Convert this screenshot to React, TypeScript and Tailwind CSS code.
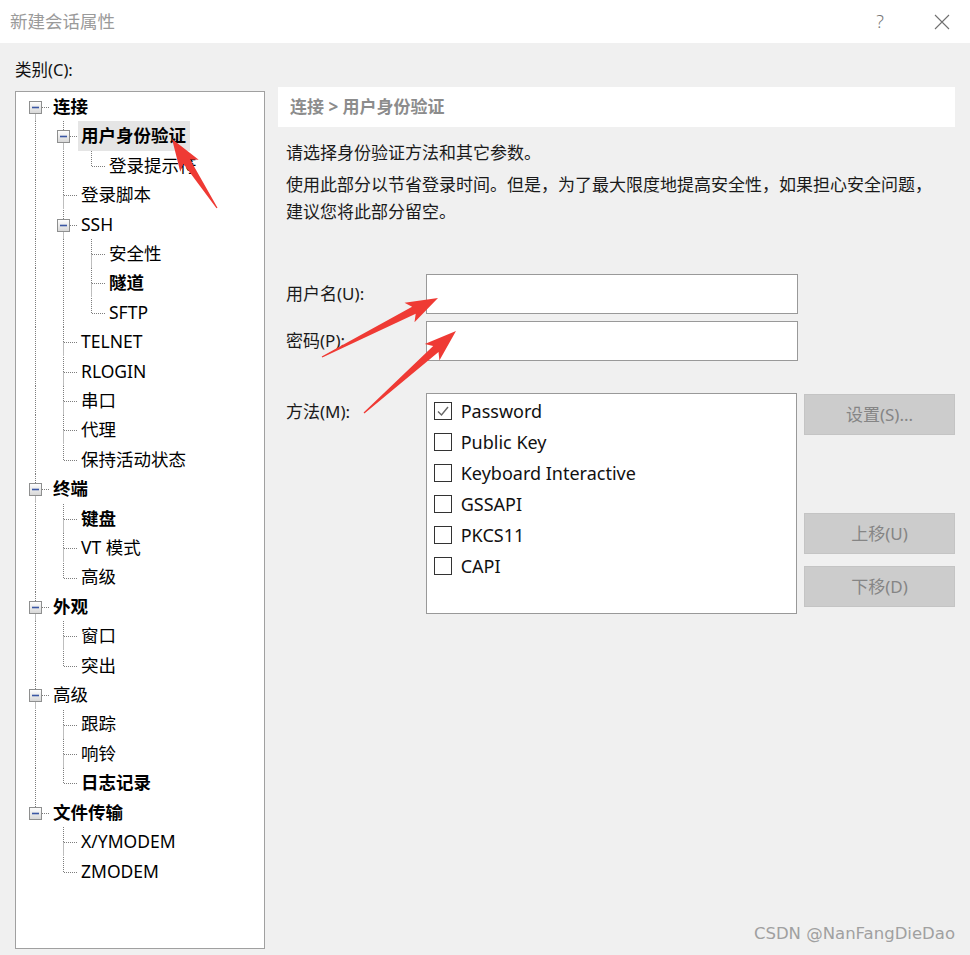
import React from "react"

type Node = {
  label: string
  bold?: boolean
  selected?: boolean
  children?: Node[]
}

type Row = {
  label: string
  bold?: boolean
  selected?: boolean
  level: number
  guides: boolean[]
  hasNext: boolean
  first: boolean
  expander: boolean
}

const tree: Node[] = [
  {
    label: "连接",
    bold: true,
    children: [
      { label: "用户身份验证", bold: true, selected: true, children: [{ label: "登录提示符" }] },
      { label: "登录脚本" },
      {
        label: "SSH",
        children: [{ label: "安全性" }, { label: "隧道", bold: true }, { label: "SFTP" }],
      },
      { label: "TELNET" },
      { label: "RLOGIN" },
      { label: "串口" },
      { label: "代理" },
      { label: "保持活动状态" },
    ],
  },
  {
    label: "终端",
    bold: true,
    children: [{ label: "键盘", bold: true }, { label: "VT 模式" }, { label: "高级" }],
  },
  { label: "外观", bold: true, children: [{ label: "窗口" }, { label: "突出" }] },
  {
    label: "高级",
    children: [{ label: "跟踪" }, { label: "响铃" }, { label: "日志记录", bold: true }],
  },
  {
    label: "文件传输",
    bold: true,
    children: [{ label: "X/YMODEM" }, { label: "ZMODEM" }],
  },
]

const flatten = (nodes: Node[], level: number, guides: boolean[], out: Row[]) => {
  nodes.forEach((n, i) => {
    const hasNext = i < nodes.length - 1
    out.push({
      label: n.label,
      bold: n.bold,
      selected: n.selected,
      level,
      guides,
      hasNext,
      first: level === 0 && i === 0,
      expander: !!n.children,
    })
    if (n.children) flatten(n.children, level + 1, [...guides, hasNext], out)
  })
  return out
}

const rows = flatten(tree, 0, [], [])

const ROW_H = 29.42
const LINE = "#7d7d7d"

/* ============ tree pieces ============ */
function GuideCell({ on }: { on: boolean }) {
  return (
    <svg width="28" height={ROW_H} className="shrink-0">
      {on && <line x1="13.5" y1="0" x2="13.5" y2={ROW_H} stroke={LINE} strokeDasharray="1 1" />}
    </svg>
  )
}

function ConnectorCell({ row }: { row: Row }) {
  const c = Math.round(ROW_H / 2) + 0.5
  return (
    <svg width="28" height={ROW_H} className="shrink-0">
      {!row.first && <line x1="13.5" y1="0" x2="13.5" y2={c} stroke={LINE} strokeDasharray="1 1" />}
      {row.hasNext && <line x1="13.5" y1={c} x2="13.5" y2={ROW_H} stroke={LINE} strokeDasharray="1 1" />}
      <line x1="14" y1={c} x2="28" y2={c} stroke={LINE} strokeDasharray="1 1" />
      {row.expander && (
        <>
          <defs>
            <linearGradient id="exp" x1="0" y1="0" x2="0" y2="1">
              <stop offset="0" stopColor="#ffffff" />
              <stop offset="1" stopColor="#d6d6d6" />
            </linearGradient>
          </defs>
          <rect x="7.5" y={c - 6} width="12" height="12" fill="url(#exp)" stroke="#8e8f8f" />
          <line x1="10" y1={c} x2="17" y2={c} stroke="#3b57a3" strokeWidth="1.6" />
        </>
      )}
    </svg>
  )
}

function TreeRow({ row }: { row: Row }) {
  return (
    <div className="flex h-[29.42px] items-stretch">
      {row.guides.map((g, i) => (
        <GuideCell key={i} on={g} />
      ))}
      <ConnectorCell row={row} />
      <span
        className={`flex items-center pl-[3px] pr-[4px] text-[17.5px] leading-none text-black ${
          row.bold ? "font-bold" : ""
        } ${row.selected ? "bg-[#e5e5e5]" : ""}`}
      >
        {row.label}
      </span>
    </div>
  )
}

/* ============ red annotation arrow ============ */
function Arrow({ x1, y1, x2, y2 }: { x1: number; y1: number; x2: number; y2: number }) {
  const len = Math.hypot(x2 - x1, y2 - y1)
  const dx = (x2 - x1) / len
  const dy = (y2 - y1) / len
  const nx = -dy
  const ny = dx
  const H = 27
  const neckX = x2 - dx * H
  const neckY = y2 - dy * H
  const backX = x2 - dx * (H + 5)
  const backY = y2 - dy * (H + 5)
  const p = (x: number, y: number) => `${x.toFixed(1)},${y.toFixed(1)}`
  const pts = [
    p(x1 + nx * 0.6, y1 + ny * 0.6),
    p(neckX + nx * 4, neckY + ny * 4),
    p(backX + nx * 11, backY + ny * 11),
    p(x2, y2),
    p(backX - nx * 11, backY - ny * 11),
    p(neckX - nx * 4, neckY - ny * 4),
    p(x1 - nx * 0.6, y1 - ny * 0.6),
  ].join(" ")
  return <polygon points={pts} fill="#ef3a34" />
}

/* ============ checkbox ============ */
function Check({ label, checked }: { label: string; checked?: boolean }) {
  return (
    <div className="flex h-[31px] items-center gap-[9px]">
      <span className="flex h-[18px] w-[18px] items-center justify-center border border-[#333] bg-white">
        {checked && (
          <svg width="14" height="14" viewBox="0 0 14 14">
            <path d="M2 7.5 L5.5 11 L12 3" fill="none" stroke="#666" strokeWidth="1.4" />
          </svg>
        )}
      </span>
      <span className="text-[18px] leading-none text-[#111]">{label}</span>
    </div>
  )
}

function GrayButton({ children }: { children: React.ReactNode }) {
  return (
    <div className="flex h-[41px] w-[151px] items-center justify-center border border-[#c4c4c4] bg-[#cccccc] text-[17px] text-[#858585]">
      {children}
    </div>
  )
}

export default function App() {
  return (
    <div className="relative flex h-[955px] w-[970px] flex-col overflow-hidden bg-[#f0f0f0] font-['Noto_Sans','Noto_Sans_CJK_SC',sans-serif]">
      {/* title bar */}
      <div className="flex h-[43px] items-center bg-white pl-[10px] pr-[20px]">
        <span className="text-[17.5px] text-[#9a9a9a]">新建会话属性</span>
        <span className="ml-auto mr-[50px] text-[18px] font-light text-[#777]">?</span>
        <svg width="16" height="16" viewBox="0 0 16 16">
          <path d="M1 1 L15 15 M15 1 L1 15" stroke="#707070" strokeWidth="1.1" />
        </svg>
      </div>

      {/* body */}
      <div className="flex flex-1 flex-col">
        <div className="pl-[15px] pt-[17px] text-[16.5px] leading-[20px] text-[#111]">类别(C):</div>

        <div className="mt-[7px] flex items-start">
          {/* category tree */}
          <div className="ml-[15px] mt-[4px] h-[858px] w-[250px] border border-[#a0a0a0] bg-white pl-[6px]">
            {rows.map((r, i) => (
              <TreeRow key={i} row={r} />
            ))}
          </div>

          {/* right panel */}
          <div className="ml-[13px] flex w-[677px] flex-col">
            <div className="flex h-[40px] items-center bg-white pl-[12px] text-[17px] font-bold text-[#8c8c8c]">
              连接 &gt; 用户身份验证
            </div>

            <div className="mt-[12px] pl-[8px] text-[17px] leading-[27px] text-[#1a1a1a]">
              请选择身份验证方法和其它参数。
            </div>
            <div className="mt-[5px] pl-[8px] pr-[4px] text-[17px] leading-[27px] text-[#1a1a1a]">
              使用此部分以节省登录时间。但是，为了最大限度地提高安全性，如果担心安全问题，
              <br />
              建议您将此部分留空。
            </div>

            <div className="mt-[49px] flex items-center">
              <div className="w-[148px] pl-[8px] text-[17px] text-[#1a1a1a]">用户名(U):</div>
              <div className="h-[40px] w-[372px] border border-[#999] bg-white" />
            </div>
            <div className="mt-[7px] flex items-center">
              <div className="w-[148px] pl-[8px] text-[17px] text-[#1a1a1a]">密码(P):</div>
              <div className="h-[40px] w-[372px] border border-[#999] bg-white" />
            </div>

            <div className="mt-[32px] flex items-start">
              <div className="w-[148px] pl-[8px] pt-[5px] text-[17px] leading-[27px] text-[#1a1a1a]">方法(M):</div>
              <div className="h-[221px] w-[372px] border border-[#999] bg-white pl-[7px] pt-[1px]">
                <Check label="Password" checked />
                <Check label="Public Key" />
                <Check label="Keyboard Interactive" />
                <Check label="GSSAPI" />
                <Check label="PKCS11" />
                <Check label="CAPI" />
              </div>
              <div className="ml-[7px] mt-[1px] flex flex-col">
                <GrayButton>设置(S)...</GrayButton>
                <div className="mt-[78px]">
                  <GrayButton>上移(U)</GrayButton>
                </div>
                <div className="mt-[12px]">
                  <GrayButton>下移(D)</GrayButton>
                </div>
              </div>
            </div>
          </div>
        </div>
      </div>

      {/* watermark */}
      <div className="absolute bottom-[8px] right-[15px] font-['DejaVu_Sans',sans-serif] text-[16.5px] text-[#a0a0a0]">
        CSDN @NanFangDieDao
      </div>

      {/* annotation arrows */}
      <svg className="pointer-events-none absolute left-0 top-0" width="970" height="955">
        <Arrow x1={217} y1={208} x2={172} y2={139} />
        <Arrow x1={322} y1={357} x2={438} y2={298} />
        <Arrow x1={364} y1={413} x2={456} y2={331} />
      </svg>
    </div>
  )
}
